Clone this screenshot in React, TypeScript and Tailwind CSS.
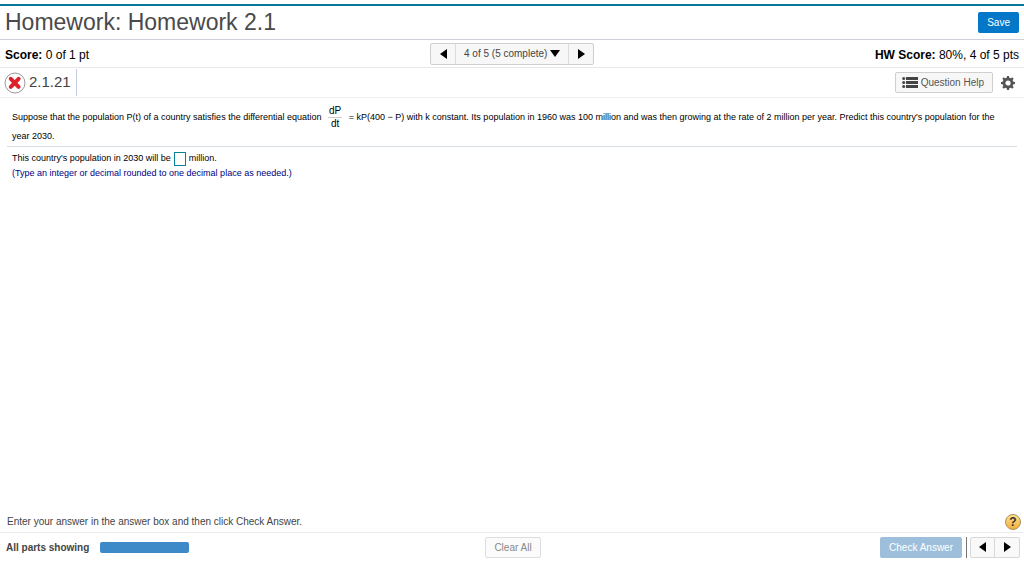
import { useState } from 'react'

const QUESTION_COUNT = 5
const COMPLETED = 5

function Triangle({ direction }: { direction: 'left' | 'right' | 'down' }) {
  const points = {
    left: '7,0 7,10 0,5',
    right: '0,0 0,10 7,5',
    down: '0,0 10,0 5,7',
  }
  const down = direction === 'down'
  return (
    <svg width={down ? 10 : 7} height={down ? 7 : 10} aria-hidden="true" className="shrink-0">
      <polygon points={points[direction]} fill="#000" />
    </svg>
  )
}

function IncorrectIcon() {
  return (
    <svg width="22" height="22" viewBox="0 0 22 22" role="img" aria-label="Incorrect" className="shrink-0">
      <circle cx="11" cy="11" r="10" fill="#fff" stroke="#999" />
      <path d="M6.8 6.8 L14.6 14.8 M14.6 6.8 L6.8 14.8" stroke="#e01f2d" strokeWidth="4" strokeLinecap="round" />
    </svg>
  )
}

function ListIcon() {
  return (
    <svg width="16" height="11" viewBox="0 0 16 11" aria-hidden="true" className="shrink-0">
      <g fill="#444">
        <circle cx="1.7" cy="1.6" r="1.5" />
        <circle cx="1.7" cy="5.5" r="1.5" />
        <circle cx="1.7" cy="9.4" r="1.5" />
        <rect x="4" y="0" width="12" height="3" />
        <rect x="4" y="4" width="12" height="3" />
        <rect x="4" y="8" width="12" height="3" />
      </g>
    </svg>
  )
}

function GearIcon() {
  const angles = [0, 45, 90, 135, 180, 225, 270, 315]
  return (
    <svg width="14" height="14" viewBox="0 0 14 14" aria-hidden="true">
      <circle cx="7" cy="7" r="4" fill="none" stroke="#555" strokeWidth="2.8" />
      {angles.map((angle) => (
        <path key={angle} d="M5.6 2.4 L6 0 H8 L8.4 2.4 Z" fill="#555" transform={`rotate(${angle} 7 7)`} />
      ))}
    </svg>
  )
}

function Header() {
  return (
    <header className="border-b border-[#cdced9] pt-1">
      <div className="h-0.5 bg-[#067a99]" />
      <div className="flex h-[33px] items-center justify-between px-[5px]">
        <h1 className="pb-0.5 text-[23px] leading-7 text-[#4a4a4a]">Homework: Homework 2.1</h1>
        <button type="button" className="h-[21px] rounded-xs bg-[#0577c9] px-[9px] text-[10px] text-white">
          Save
        </button>
      </div>
    </header>
  )
}

function ScoreBar() {
  const [question, setQuestion] = useState(4)

  return (
    <div className="grid h-7 grid-cols-[1fr_auto_1fr] items-center border-b border-[#e8e8ec] px-[5px] text-[12px] text-black">
      <p className="pt-0.5">
        <strong>Score:</strong> 0 of 1 pt
      </p>
      <div className="flex h-[22px] rounded-xs border border-[#cfcfcf] bg-[#f7f7f7]">
        <button
          type="button"
          aria-label="Previous question"
          onClick={() => setQuestion(Math.max(1, question - 1))}
          className="flex w-6 items-center justify-center"
        >
          <Triangle direction="left" />
        </button>
        <div className="relative flex items-center border-x border-[#dcdcdc]">
          <select
            aria-label="Question"
            value={question}
            onChange={(e) => setQuestion(Number(e.target.value))}
            className="h-5 appearance-none bg-transparent pl-2 pr-5 text-[10px] text-[#444]"
          >
            {Array.from({ length: QUESTION_COUNT }, (_, i) => (
              <option key={i} value={i + 1}>
                {`${i + 1} of ${QUESTION_COUNT} (${COMPLETED} complete)`}
              </option>
            ))}
          </select>
          <span className="pointer-events-none absolute inset-y-0 right-2 flex items-center">
            <Triangle direction="down" />
          </span>
        </div>
        <button
          type="button"
          aria-label="Next question"
          onClick={() => setQuestion(Math.min(QUESTION_COUNT, question + 1))}
          className="flex w-6 items-center justify-center"
        >
          <Triangle direction="right" />
        </button>
      </div>
      <p className="pt-0.5 text-right">
        <strong>HW Score:</strong> 80%, 4 of 5 pts
      </p>
    </div>
  )
}

function QuestionBar() {
  return (
    <div className="flex h-[30px] items-center justify-between border-b border-[#f0f0f3] pl-1 pr-[9px]">
      <div className="flex h-[27px] items-center gap-[3px] border-r border-[#c5cbe0] pr-[5px]">
        <IncorrectIcon />
        <h2 className="text-[15px] text-[#444]">2.1.21</h2>
      </div>
      <div className="flex items-center gap-2">
        <button
          type="button"
          className="flex h-[21px] items-center gap-[3px] rounded-xs border border-[#cfcfcf] bg-[#f7f7f7] pl-1.5 pr-2 text-[10px] text-[#555]"
        >
          <ListIcon />
          Question Help
        </button>
        <button type="button" aria-label="Settings">
          <GearIcon />
        </button>
      </div>
    </div>
  )
}

function Question() {
  const [answer, setAnswer] = useState('')

  return (
    <main className="flex-1 px-[7px] text-[9px] text-black">
      <p className="border-b border-[#d5dde5] px-[5px] pt-[7px] pb-1 leading-3">
        Suppose that the population P(t) of a country satisfies the differential equation{' '}
        <span className="mx-1 inline-flex flex-col items-center align-middle text-[10px] leading-3">
          <span className="border-b border-[#ccc] px-px">dP</span>
          <span>dt</span>
        </span>{' '}
        = kP(400 − P) with k constant. Its population in 1960 was 100 million and was then growing at the rate of 2
        million per year. Predict this country's population for the year&nbsp;2030.
      </p>
      <div className="px-[5px] pt-[5px]">
        <label className="flex h-[14px] items-center gap-[3px]">
          This country's population in 2030 will be
          <input
            type="text"
            aria-label="Population in millions"
            value={answer}
            onChange={(e) => setAnswer(e.target.value)}
            className="h-[14px] w-3 border border-[#0a7f9c] bg-white outline-none"
          />
          million.
        </label>
        <p className="leading-[14px] text-[#00007f]">(Type an integer or decimal rounded to one decimal place as needed.)</p>
      </div>
    </main>
  )
}

function Footer() {
  return (
    <footer className="text-[10px] text-[#444]">
      <div className="flex h-5 items-center justify-between border-b border-[#ebebeb] pb-0.5 pl-[7px] pr-[3px]">
        <p>Enter your answer in the answer box and then click Check Answer.</p>
        <button
          type="button"
          aria-label="Help"
          className="h-4 w-4 rounded-full border border-[#a8925a] bg-linear-to-b from-[#ffe08a] to-[#f2ae38] text-[12px] leading-3 font-bold text-[#333]"
        >
          ?
        </button>
      </div>
      <div className="grid h-[30px] grid-cols-[1fr_auto_1fr] items-center pb-0.5 pl-[6px] pr-1">
        <div className="flex items-center gap-[11px]">
          <span className="font-bold">All parts showing</span>
          <div className="h-[11px] w-[89px] rounded-xs bg-[#3e8ac9]" />
        </div>
        <button type="button" className="h-[21px] rounded-xs border border-[#dedede] bg-[#fbfbfb] px-2 text-[#888]">
          Clear All
        </button>
        <div className="flex items-center justify-end">
          <button type="button" className="h-[21px] rounded-xs bg-[#9dbfdb] px-[9px] text-white">
            Check Answer
          </button>
          <div className="ml-1 h-[21px] w-px bg-[#777]" />
          <div className="ml-[3px] flex h-[21px] rounded-xs border border-[#d8d8d8] bg-[#f9f9f9]">
            <button type="button" aria-label="Previous" className="flex w-6 items-center justify-center border-r border-[#d8d8d8]">
              <Triangle direction="left" />
            </button>
            <button type="button" aria-label="Next" className="flex w-6 items-center justify-center">
              <Triangle direction="right" />
            </button>
          </div>
        </div>
      </div>
    </footer>
  )
}

export default function App() {
  return (
    <div className="flex min-h-screen flex-col bg-white font-['Liberation_Sans',Arial,sans-serif]">
      <Header />
      <ScoreBar />
      <QuestionBar />
      <Question />
      <Footer />
    </div>
  )
}
